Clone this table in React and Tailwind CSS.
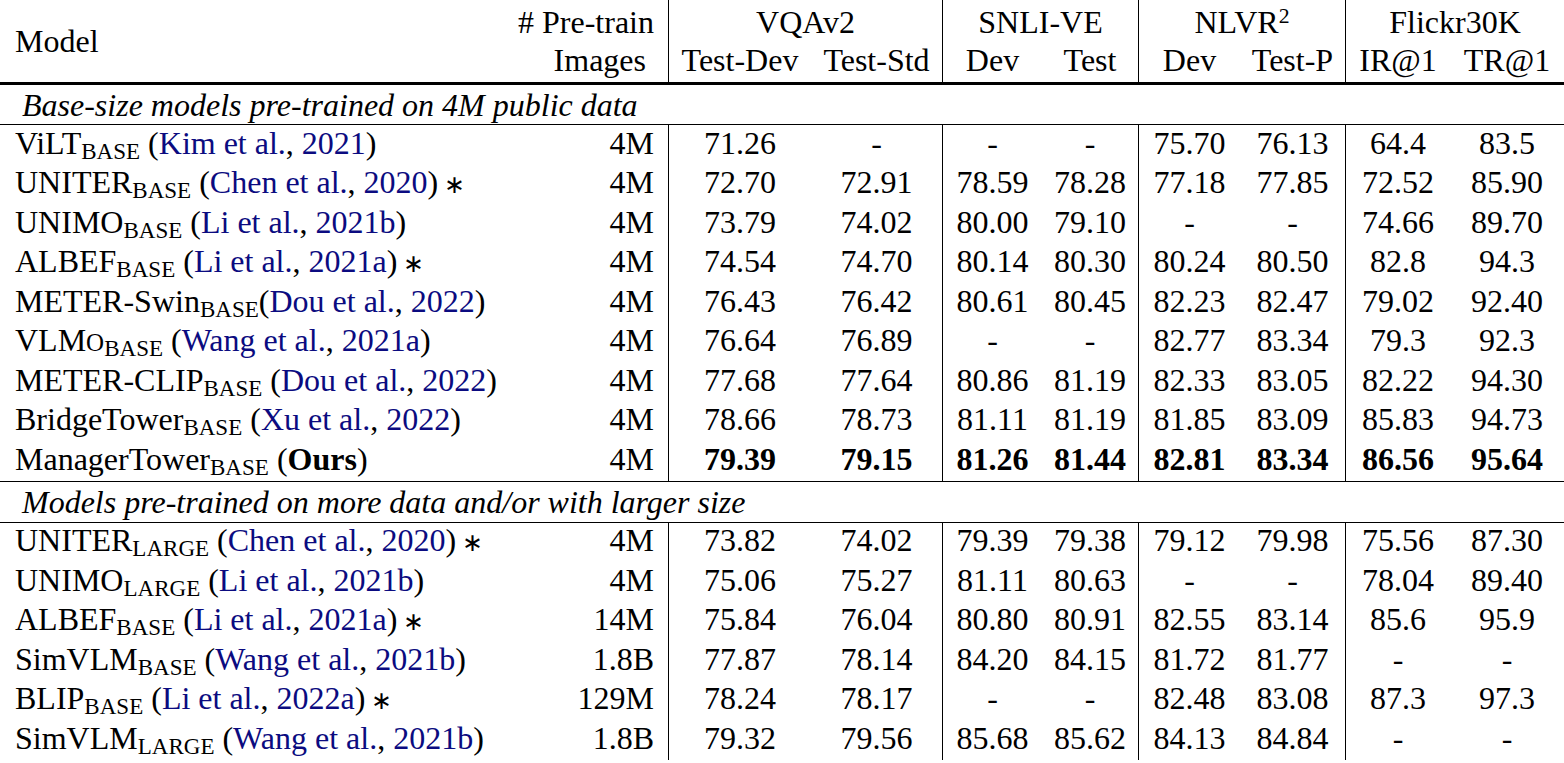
import React from "react";

const GRID =
  "grid grid-cols-[520px_148px_143px_131px_100px_96px_102px_105px_105px_114px]";

const Cite = ({ children }) => <span className="text-[#0b0b80]">{children}</span>;
const Sub = ({ children }) => (
  <span className="relative top-[0.22em] text-[0.72em] leading-none">{children}</span>
);
const Star = () => <span className="ml-[6px] text-[0.78em]">∗</span>;

const sec1 = [
  {
    model: (
      <>
        ViLT<Sub>BASE</Sub> (<Cite>Kim et al.</Cite>, <Cite>2021</Cite>)
      </>
    ),
    img: "4M",
    v: ["71.26", "-", "-", "-", "75.70", "76.13", "64.4", "83.5"],
  },
  {
    model: (
      <>
        UNITER<Sub>BASE</Sub> (<Cite>Chen et al.</Cite>, <Cite>2020</Cite>)
        <Star />
      </>
    ),
    img: "4M",
    v: ["72.70", "72.91", "78.59", "78.28", "77.18", "77.85", "72.52", "85.90"],
  },
  {
    model: (
      <>
        UNIMO<Sub>BASE</Sub> (<Cite>Li et al.</Cite>, <Cite>2021b</Cite>)
      </>
    ),
    img: "4M",
    v: ["73.79", "74.02", "80.00", "79.10", "-", "-", "74.66", "89.70"],
  },
  {
    model: (
      <>
        ALBEF<Sub>BASE</Sub> (<Cite>Li et al.</Cite>, <Cite>2021a</Cite>)
        <Star />
      </>
    ),
    img: "4M",
    v: ["74.54", "74.70", "80.14", "80.30", "80.24", "80.50", "82.8", "94.3"],
  },
  {
    model: (
      <>
        METER-Swin<Sub>BASE</Sub>(<Cite>Dou et al.</Cite>, <Cite>2022</Cite>)
      </>
    ),
    img: "4M",
    v: ["76.43", "76.42", "80.61", "80.45", "82.23", "82.47", "79.02", "92.40"],
  },
  {
    model: (
      <>
        VLM<span className="text-[0.78em]">O</span>
        <Sub>BASE</Sub> (<Cite>Wang et al.</Cite>, <Cite>2021a</Cite>)
      </>
    ),
    img: "4M",
    v: ["76.64", "76.89", "-", "-", "82.77", "83.34", "79.3", "92.3"],
  },
  {
    model: (
      <>
        METER-CLIP<Sub>BASE</Sub> (<Cite>Dou et al.</Cite>, <Cite>2022</Cite>)
      </>
    ),
    img: "4M",
    v: ["77.68", "77.64", "80.86", "81.19", "82.33", "83.05", "82.22", "94.30"],
  },
  {
    model: (
      <>
        BridgeTower<Sub>BASE</Sub> (<Cite>Xu et al.</Cite>, <Cite>2022</Cite>)
      </>
    ),
    img: "4M",
    v: ["78.66", "78.73", "81.11", "81.19", "81.85", "83.09", "85.83", "94.73"],
  },
  {
    model: (
      <>
        ManagerTower<Sub>BASE</Sub> (<span className="font-bold">Ours</span>)
      </>
    ),
    img: "4M",
    bold: true,
    v: ["79.39", "79.15", "81.26", "81.44", "82.81", "83.34", "86.56", "95.64"],
  },
];

const sec2 = [
  {
    model: (
      <>
        UNITER<Sub>LARGE</Sub> (<Cite>Chen et al.</Cite>, <Cite>2020</Cite>)
        <Star />
      </>
    ),
    img: "4M",
    v: ["73.82", "74.02", "79.39", "79.38", "79.12", "79.98", "75.56", "87.30"],
  },
  {
    model: (
      <>
        UNIMO<Sub>LARGE</Sub> (<Cite>Li et al.</Cite>, <Cite>2021b</Cite>)
      </>
    ),
    img: "4M",
    v: ["75.06", "75.27", "81.11", "80.63", "-", "-", "78.04", "89.40"],
  },
  {
    model: (
      <>
        ALBEF<Sub>BASE</Sub> (<Cite>Li et al.</Cite>, <Cite>2021a</Cite>)
        <Star />
      </>
    ),
    img: "14M",
    v: ["75.84", "76.04", "80.80", "80.91", "82.55", "83.14", "85.6", "95.9"],
  },
  {
    model: (
      <>
        SimVLM<Sub>BASE</Sub> (<Cite>Wang et al.</Cite>, <Cite>2021b</Cite>)
      </>
    ),
    img: "1.8B",
    v: ["77.87", "78.14", "84.20", "84.15", "81.72", "81.77", "-", "-"],
  },
  {
    model: (
      <>
        BLIP<Sub>BASE</Sub> (<Cite>Li et al.</Cite>, <Cite>2022a</Cite>)
        <Star />
      </>
    ),
    img: "129M",
    v: ["78.24", "78.17", "-", "-", "82.48", "83.08", "87.3", "97.3"],
  },
  {
    model: (
      <>
        SimVLM<Sub>LARGE</Sub> (<Cite>Wang et al.</Cite>, <Cite>2021b</Cite>)
      </>
    ),
    img: "1.8B",
    v: ["79.32", "79.56", "85.68", "85.62", "84.13", "84.84", "-", "-"],
  },
];

function DataRow({ row }) {
  return (
    <div className={`${GRID} h-[39.5px]`}>
      <div className="flex items-center pb-[4px] pl-[15px] whitespace-nowrap">
        <span>{row.model}</span>
      </div>
      <div className="flex items-center justify-end pb-[4px] pr-[14px] whitespace-nowrap">
        <span>{row.img}</span>
      </div>
      {row.v.map((val, i) => (
        <div
          key={i}
          className={`flex items-center justify-center pb-[4px] whitespace-nowrap ${
            i % 2 === 0 ? "border-l border-black" : ""
          } ${row.bold ? "font-bold" : ""}`}
        >
          <span>{val}</span>
        </div>
      ))}
    </div>
  );
}

export default function App() {
  return (
    <div className="h-[763px] w-[1564px] overflow-hidden bg-white font-['Liberation_Serif','Times_New_Roman',serif] text-[32px] leading-none whitespace-nowrap text-black">
      {/* header */}
      <div className={`${GRID} grid-rows-[42px_40px]`}>
        <div className="row-span-2 flex items-center pl-[15px]">Model</div>
        <div className="flex items-center justify-end pt-[2px] pr-[14px]"># Pre-train</div>
        <div className="col-span-2 flex items-center justify-center border-l border-black pt-[2px]">VQAv2</div>
        <div className="col-span-2 flex items-center justify-center border-l border-black pt-[2px]">SNLI-VE</div>
        <div className="col-span-2 flex items-center justify-center border-l border-black pt-[2px]">
          <span>
            NLVR<span className="relative -top-[0.45em] text-[0.68em]">2</span>
          </span>
        </div>
        <div className="col-span-2 flex items-center justify-center border-l border-black pt-[2px]">Flickr30K</div>
        <div className="col-start-2 flex items-center justify-end pb-[4px] pr-[22px]">Images</div>
        <div className="flex items-center justify-center border-l border-black pb-[4px]">Test-Dev</div>
        <div className="flex items-center justify-center pb-[4px]">Test-Std</div>
        <div className="flex items-center justify-center border-l border-black pb-[4px]">Dev</div>
        <div className="flex items-center justify-center pb-[4px]">Test</div>
        <div className="flex items-center justify-center border-l border-black pb-[4px]">Dev</div>
        <div className="flex items-center justify-center pb-[4px]">Test-P</div>
        <div className="flex items-center justify-center border-l border-black pb-[4px]">IR@1</div>
        <div className="flex items-center justify-center pb-[4px]">TR@1</div>
      </div>
      <div className="h-[3px] bg-black" />
      <div className="flex h-[39px] items-center pl-[22px] italic">
        Base-size models pre-trained on 4M public data
      </div>
      <div className="h-px bg-black" />
      {sec1.map((r, i) => (
        <DataRow key={i} row={r} />
      ))}
      <div className="h-px bg-black" />
      <div className="flex h-[40px] items-center pl-[22px] italic">
        Models pre-trained on more data and/or with larger size
      </div>
      <div className="h-px bg-black" />
      {sec2.map((r, i) => (
        <DataRow key={i} row={r} />
      ))}
    </div>
  );
}
